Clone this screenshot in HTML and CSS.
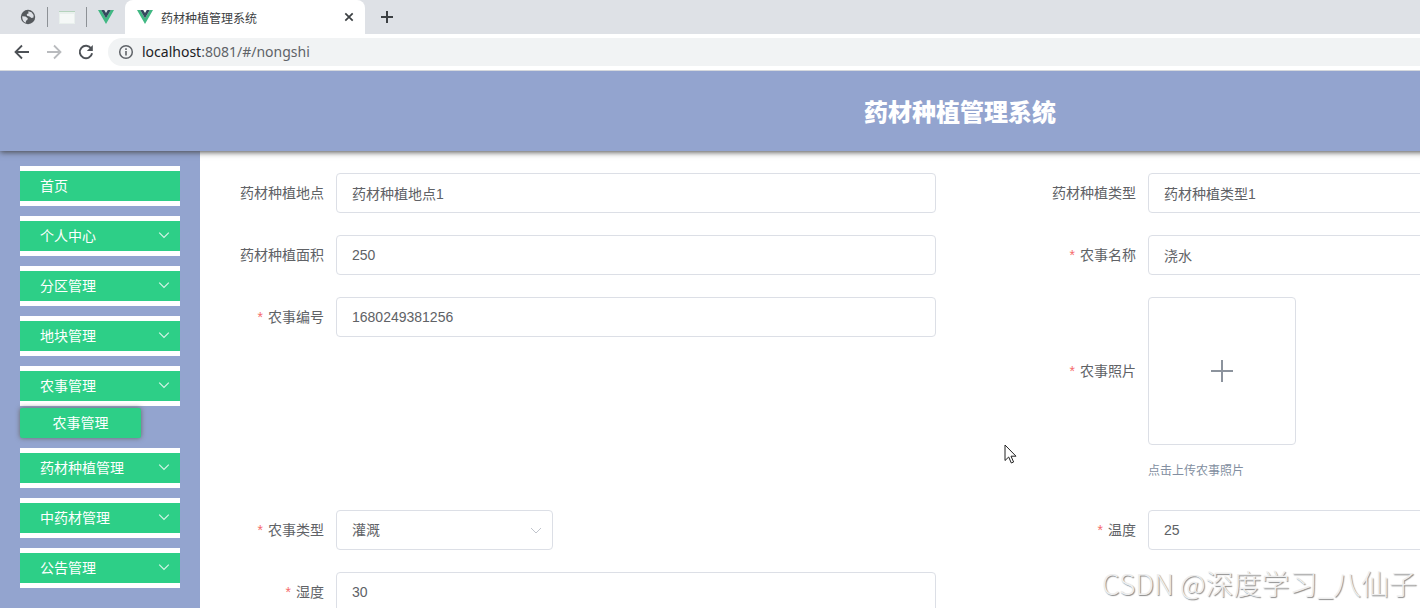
FILE: index.html
```
<!DOCTYPE html>
<html lang="zh-CN">
<head>
  <meta charset="UTF-8">
  <meta name="viewport" content="width=device-width, initial-scale=1.0">
  <title>药材种植管理系统</title>
  <link rel="stylesheet" href="styles.css">
</head>
<body>

  <!-- browser bar -->
  <div class="browser">
    <div class="tabs">
      <div class="pinned">
        <svg width="16" height="16" viewBox="0 0 16 16"><circle cx="8" cy="8" r="7.200" fill="#55595d"/><path d="M2.200 7.200L5.500 7.600 7.800 9.200 7.300 11 6 11.700 5.800 13.800C3.500 13 2 10.500 2.200 7.200zM8.300 2.300L11.500 3.200 13.600 6 13.500 8.500 11.500 9 9.500 7.500 7 6.800 6.800 5 8.500 4.500z" fill="#dee1e6"/></svg>
      </div>
      <div class="pinned">
        <svg width="18" height="16" viewBox="0 0 18 16"><rect x="1" y="2" width="16" height="13" fill="#e9f0ed"/><path d="M1 2.500h16" stroke="#b5d3bd"/><path d="M2 5h14v9H2z" fill="#f5f8f7"/></svg>
      </div>
      <div class="pinned last">
        <svg width="16" height="14" viewBox="0 0 16 14"><path d="M0 0h3.200L8 8.300 12.800 0H16L8 14z" fill="#41b883"/><path d="M3.200 0H6.200L8 3.100 9.800 0h3L8 8.300z" fill="#35495e"/></svg>
      </div>
      <div class="tab">
        <svg width="16" height="14" viewBox="0 0 16 14"><path d="M0 0h3.200L8 8.300 12.800 0H16L8 14z" fill="#41b883"/><path d="M3.200 0H6.200L8 3.100 9.800 0h3L8 8.300z" fill="#35495e"/></svg>
        <span class="tab-title">药材种植管理系统</span>
        <button class="icon-btn" aria-label="关闭标签页">
          <svg width="10" height="10" viewBox="0 0 10 10"><path d="M1.300 1.300l7.400 7.400M8.700 1.300L1.300 8.700" stroke="#3c4043" stroke-width="1.700"/></svg>
        </button>
      </div>
      <button class="icon-btn new-tab" aria-label="新标签页">
        <svg width="14" height="14" viewBox="0 0 14 14"><path d="M7 1v12M1 7h12" stroke="#3c4043" stroke-width="2"/></svg>
      </button>
    </div>
    <div class="toolbar">
      <button class="icon-btn" aria-label="后退">
        <svg width="16" height="16" viewBox="0 0 16 16"><path d="M15 8H2M8 1.500L1.500 8 8 14.500" fill="none" stroke="#4d5156" stroke-width="1.800"/></svg>
      </button>
      <button class="icon-btn" aria-label="前进">
        <svg width="16" height="16" viewBox="0 0 16 16"><path d="M1 8h13M8 1.500L14.500 8 8 14.500" fill="none" stroke="#b9bbbe" stroke-width="1.800"/></svg>
      </button>
      <button class="icon-btn" aria-label="刷新">
        <svg width="16" height="16" viewBox="0 0 16 16"><path d="M13.200 4.600A6.200 6.200 0 1 0 14.100 9.200" fill="none" stroke="#4d5156" stroke-width="1.900"/><path d="M14.800 1v6H8.800z" fill="#4d5156"/></svg>
      </button>
      <div class="address">
        <svg width="16" height="16" viewBox="0 0 16 16"><circle cx="8" cy="8" r="6.300" fill="none" stroke="#5f6368" stroke-width="1.500"/><path d="M8 7v4.500M8 4.300V6" stroke="#5f6368" stroke-width="1.600"/></svg>
        <span class="url"><b>localhost</b>:8081/#/nongshi</span>
      </div>
    </div>
  </div>

  <header>
    <h1>药材种植管理系统</h1>
  </header>

  <div class="container">
    <nav class="sidebar">
      <button class="menu-item">首页</button>
      <button class="menu-item">个人中心
        <svg class="arrow" viewBox="0 0 10 6"><path d="M1 1l4 4 4-4"/></svg>
      </button>
      <button class="menu-item">分区管理
        <svg class="arrow" viewBox="0 0 10 6"><path d="M1 1l4 4 4-4"/></svg>
      </button>
      <button class="menu-item">地块管理
        <svg class="arrow" viewBox="0 0 10 6"><path d="M1 1l4 4 4-4"/></svg>
      </button>
      <div class="menu-group">
        <button class="menu-item">农事管理
          <svg class="arrow" viewBox="0 0 10 6"><path d="M1 1l4 4 4-4"/></svg>
        </button>
        <a class="sub-item" href="#/nongshi">农事管理</a>
      </div>
      <button class="menu-item">药材种植管理
        <svg class="arrow" viewBox="0 0 10 6"><path d="M1 1l4 4 4-4"/></svg>
      </button>
      <button class="menu-item">中药材管理
        <svg class="arrow" viewBox="0 0 10 6"><path d="M1 1l4 4 4-4"/></svg>
      </button>
      <button class="menu-item">公告管理
        <svg class="arrow" viewBox="0 0 10 6"><path d="M1 1l4 4 4-4"/></svg>
      </button>
    </nav>

    <main>
      <form class="form">
        <div class="form-item">
          <label for="didian">药材种植地点</label>
          <input id="didian" type="text" value="药材种植地点1">
        </div>
        <div class="form-item">
          <label for="leixing">药材种植类型</label>
          <input id="leixing" type="text" value="药材种植类型1">
        </div>
        <div class="form-item">
          <label for="mianji">药材种植面积</label>
          <input id="mianji" type="text" value="250">
        </div>
        <div class="form-item">
          <label for="mingcheng" class="required">农事名称</label>
          <input id="mingcheng" type="text" value="浇水">
        </div>
        <div class="form-item">
          <label for="bianhao" class="required">农事编号</label>
          <input id="bianhao" type="text" value="1680249381256">
        </div>
        <div class="form-item">
          <label for="zhaopian" class="required photo-label">农事照片</label>
          <div class="upload">
            <button type="button" id="zhaopian" class="upload-box" aria-label="上传农事照片">
              <svg width="24" height="24" viewBox="0 0 24 24"><path d="M12 1v22M1 12h22" stroke="#8c939d" stroke-width="2"/></svg>
            </button>
            <p class="tip">点击上传农事照片</p>
          </div>
        </div>
        <div class="form-item">
          <label for="nongshileixing" class="required">农事类型</label>
          <div class="select">
            <select id="nongshileixing">
              <option>灌溉</option>
            </select>
            <svg class="select-arrow" viewBox="0 0 12 8"><path d="M1 1l5 5 5-5"/></svg>
          </div>
        </div>
        <div class="form-item">
          <label for="wendu" class="required">温度</label>
          <input id="wendu" type="text" value="25">
        </div>
        <div class="form-item">
          <label for="shidu" class="required">湿度</label>
          <input id="shidu" type="text" value="30">
        </div>
      </form>
    </main>
  </div>

  <svg class="cursor" width="13" height="20" viewBox="0 0 13 20"><path d="M1 1v15.500l3.700-3.500 2.600 6 2.300-1-2.600-5.800H12z" fill="#fff" stroke="#222"/></svg>
  <div class="watermark">CSDN @深度学习_八仙子</div>

</body>
</html>
```
FILE: styles.css
```
* {
  box-sizing: border-box;
}

body {
  display: flex;
  flex-direction: column;
  height: 100vh;
  margin: 0;
  overflow: hidden;
  font-family: "Liberation Sans", "Noto Sans CJK SC", sans-serif;
  font-size: 14px;
  color: #606266;
  background-color: #fff;
}

button, input, select {
  font: inherit;
  color: inherit;
}

svg {
  display: block;
  flex-shrink: 0;
}

/* browser bar */
.browser {
  position: relative;
  z-index: 2;
  flex-shrink: 0;
  background-color: #fff;
  border-bottom: 1px solid #d5d8dd;
}

.tabs {
  display: flex;
  height: 34px;
  padding-left: 9px;
  background-color: #dee1e6;
}

.pinned {
  display: flex;
  align-items: center;
  justify-content: center;
  width: 39px;
  height: 20px;
  margin-top: 7px;
  border-right: 1px solid #8d9196;
}

.pinned.last {
  width: 38px;
  border-right: none;
}

.tab {
  display: flex;
  align-items: center;
  width: 240px;
  padding: 0 11px 0 12px;
  background-color: #fff;
  border-radius: 8px 8px 0 0;
}

.tab-title {
  flex: 1;
  margin-left: 8px;
  font-size: 12px;
  color: #3c4043;
}

.icon-btn {
  padding: 0;
  border: none;
  background: none;
}

.new-tab {
  margin-left: 15px;
}

.toolbar {
  display: flex;
  align-items: center;
  gap: 16px;
  height: 36px;
  padding-left: 14px;
}

.address {
  display: flex;
  flex: 1;
  align-items: center;
  gap: 8px;
  height: 28px;
  margin-left: -2px;
  padding-left: 10px;
  background-color: #f1f3f4;
  border-radius: 14px 0 0 14px;
}

.url {
  padding-bottom: 1px;
  font-family: "Noto Sans", "Open Sans", sans-serif;
  font-size: 14px;
  color: #5f6368;
}

.url b {
  font-weight: normal;
  color: #202124;
}

/* the system is laid out for full hd screens */
header, .container {
  width: 100%;
  min-width: 1920px;
}

header {
  position: relative;
  z-index: 1;
  display: flex;
  flex-shrink: 0;
  align-items: center;
  justify-content: center;
  height: 80px;
  padding-bottom: 2px;
  background-color: #93a4cf;
  box-shadow: 0 1px 6px #444;
}

h1 {
  margin: 0;
  font-size: 24px;
  font-weight: 900;
  color: #fff;
}

.container {
  display: flex;
  flex: 1;
  min-height: 0;
}

.sidebar {
  display: flex;
  flex-direction: column;
  gap: 10px;
  width: 200px;
  padding: 15px 20px;
  background-color: #93a4cf;
}

.menu-item {
  display: flex;
  flex-shrink: 0;
  align-items: center;
  justify-content: space-between;
  width: 100%;
  height: 40px;
  padding: 0 10px 2px 20px;
  color: #fff;
  background-color: #2dcf87;
  border: solid #fff;
  border-width: 5px 0;
}

.arrow {
  width: 12px;
  height: 8px;
  fill: none;
  stroke: #d5f5e7;
}

.menu-group {
  flex-shrink: 0;
}

.sub-item {
  display: block;
  width: 121px;
  margin-top: 2px;
  line-height: 30px;
  text-align: center;
  color: #fff;
  text-decoration: none;
  background-color: #2dcf87;
  border-radius: 2px;
  box-shadow: 0 0 5px #666;
}

/* form */
main {
  flex: 1;
  padding: 22px 80px 0 16px;
}

.form {
  display: grid;
  grid-template-columns: 1fr 1fr;
  row-gap: 22px;
}

.form-item {
  display: flex;
  align-items: flex-start;
}

label {
  width: 120px;
  padding-right: 12px;
  line-height: 40px;
  text-align: right;
}

.required::before {
  content: "*";
  margin-right: 5px;
  color: #f56c6c;
}

.photo-label {
  line-height: 148px;
}

input, select {
  width: 600px;
  height: 40px;
  padding: 0 15px;
  background-color: #fff;
  border: 1px solid #dcdfe6;
  border-radius: 4px;
  outline: none;
}

.select {
  position: relative;
}

select {
  width: 217px;
  appearance: none;
}

.select-arrow {
  position: absolute;
  top: 17px;
  right: 11px;
  width: 12px;
  height: 8px;
  fill: none;
  stroke: #c0c4cc;
  pointer-events: none;
}

.upload-box {
  display: flex;
  align-items: center;
  justify-content: center;
  width: 148px;
  height: 148px;
  background-color: #fff;
  border: 1px solid #dcdfe6;
  border-radius: 4px;
}

.tip {
  margin: 9px 0 0;
  font-size: 12px;
  line-height: 34px;
  color: #838fa1;
}

/* overlays */
.cursor {
  position: absolute;
  top: 444px;
  left: 1004px;
}

.watermark {
  position: absolute;
  right: 3px;
  bottom: 4px;
  font-family: "Noto Sans CJK SC", sans-serif;
  font-size: 28px;
  font-weight: 300;
  line-height: 42px;
  color: #eee;
  text-shadow: 1px 1px 1px #888;
}
```
